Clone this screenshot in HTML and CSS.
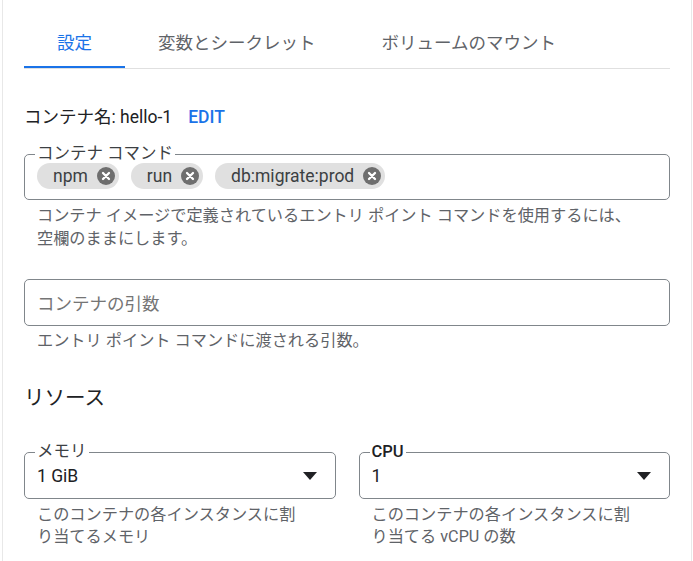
FILE: index.html
```html
<!DOCTYPE html>
<html lang="ja">
<head>
<meta charset="utf-8">
<title>設定</title>
<link rel="stylesheet" href="styles.css">
</head>
<body>
<div class="panel">
  <div class="tabs">
    <div class="tab active">設定</div>
    <div class="tab">変数とシークレット</div>
    <div class="tab">ボリュームのマウント</div>
  </div>

  <div class="name-row">
    <span>コンテナ名: hello-1</span>
    <span class="edit">EDIT</span>
  </div>

  <fieldset class="field cmd">
    <legend>コンテナ コマンド</legend>
    <div class="chips">
      <span class="chip">npm<svg class="chip-x" viewBox="0 0 18 18" width="18" height="18"><circle cx="9" cy="9" r="9" fill="#6e6e6e"/><path d="M6 6 L12 12 M12 6 L6 12" stroke="#fff" stroke-width="2.3" stroke-linecap="round"/></svg></span>
      <span class="chip">run<svg class="chip-x" viewBox="0 0 18 18" width="18" height="18"><circle cx="9" cy="9" r="9" fill="#6e6e6e"/><path d="M6 6 L12 12 M12 6 L6 12" stroke="#fff" stroke-width="2.3" stroke-linecap="round"/></svg></span>
      <span class="chip">db:migrate:prod<svg class="chip-x" viewBox="0 0 18 18" width="18" height="18"><circle cx="9" cy="9" r="9" fill="#6e6e6e"/><path d="M6 6 L12 12 M12 6 L6 12" stroke="#fff" stroke-width="2.3" stroke-linecap="round"/></svg></span>
    </div>
  </fieldset>
  <div class="hint">コンテナ イメージで定義されているエントリ ポイント コマンドを使用するには、<br>空欄のままにします。</div>

  <div class="args">コンテナの引数</div>
  <div class="hint hint-args">エントリ ポイント コマンドに渡される引数。</div>

  <h2 class="section-title">リソース</h2>

  <div class="selects">
    <div class="select-col">
      <fieldset class="field select">
        <legend>メモリ</legend>
        <div class="value"><span>1 GiB</span><span class="arrow"></span></div>
      </fieldset>
      <div class="hint hint-select">このコンテナの各インスタンスに割り当てるメモリ</div>
    </div>
    <div class="select-col">
      <fieldset class="field select">
        <legend class="strong">CPU</legend>
        <div class="value"><span>1</span><span class="arrow"></span></div>
      </fieldset>
      <div class="hint hint-select">このコンテナの各インスタンスに割り当てる vCPU の数</div>
    </div>
  </div>
</div>
</body>
</html>
```

FILE: styles.css
```css
html, body {
  margin: 0;
  background: #ffffff;
}

body {
  font-family: Roboto, "Noto Sans CJK JP", sans-serif;
  color: #202124;
}

.panel {
  margin: 0 1px 0 2px;
  border-left: 1px solid #e8e8e8;
  border-right: 1px solid #e8e8e8;
  padding: 0 21px;
  min-height: 561px;
  box-sizing: border-box;
  overflow: hidden;
}

.tabs {
  display: flex;
  margin-top: 18px;
  border-bottom: 1px solid #e0e0e0;
}

.tab {
  height: 50px;
  box-sizing: border-box;
  padding: 0 33px 4px;
  display: flex;
  align-items: center;
  font-size: 17.5px;
  color: #5f6368;
  white-space: nowrap;
}

.tab.active {
  color: #1a73e8;
  box-shadow: inset 0 -2px 0 #1a73e8;
}

.name-row {
  margin-top: 36px;
  display: flex;
  align-items: center;
  gap: 16px;
  font-size: 17.5px;
  line-height: 24px;
}

.edit {
  color: #1a73e8;
  font-weight: 500;
  font-size: 17.5px;
}

.field {
  margin: 0;
  border: 1px solid #80868b;
  border-radius: 5px;
  min-inline-size: 0;
}

.field legend {
  padding: 0 2px;
  font-size: 16.5px;
  line-height: 18px;
  color: #3c4043;
}

.field legend.strong {
  font-weight: 500;
  color: #202124;
}

.cmd {
  margin-top: 16px;
  padding: 0 10px 10px;
}

.chips {
  display: flex;
  gap: 12px;
  margin-left: 2px;
}

.chip {
  display: flex;
  align-items: center;
  gap: 9px;
  height: 26px;
  padding: 0 4px 0 16px;
  border-radius: 13px;
  background: #e0e0e0;
  font-size: 17.5px;
  font-weight: 400;
  color: #3c4043;
}

.chip-x {
  display: block;
}

.hint {
  margin-top: 4px;
  padding: 0 13px;
  font-size: 16.2px;
  line-height: 23px;
  color: #5f6368;
}

.args {
  margin-top: 29px;
  height: 47px;
  box-sizing: border-box;
  border: 1px solid #80868b;
  border-radius: 5px;
  display: flex;
  align-items: center;
  padding: 0 12px;
  font-size: 17.5px;
  color: #757575;
}

.hint-args {
  margin-top: 3px;
}

.section-title {
  margin: 32px 0 0;
  font-size: 20.5px;
  line-height: 28px;
  font-weight: 400;
  color: #202124;
}

.selects {
  display: grid;
  grid-template-columns: 1fr 1fr;
  gap: 23px;
  margin-top: 31px;
}

.select {
  padding: 0 10px 11px;
}

.value {
  margin-top: 4px;
  height: 22px;
  padding-left: 2px;
  display: flex;
  align-items: center;
  justify-content: space-between;
  font-size: 17.5px;
}

.arrow {
  width: 0;
  height: 0;
  border-left: 7px solid transparent;
  border-right: 7px solid transparent;
  border-top: 8px solid #202124;
  margin-right: 8px;
}

.hint-select {
  margin-top: 5px;
  line-height: 22px;
  max-width: 266px;
}
```
